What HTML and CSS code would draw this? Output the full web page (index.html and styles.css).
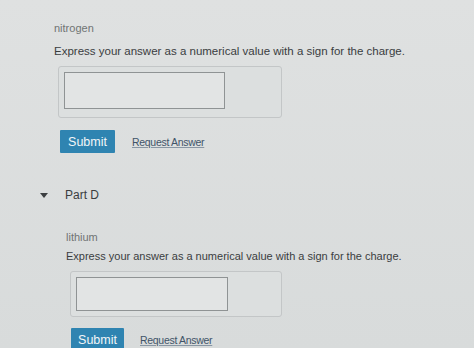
FILE: index.html
```html
<!DOCTYPE html>
<html>
<head>
<meta charset="utf-8">
<link rel="stylesheet" href="styles.css">
</head>
<body>
<div class="page">
  <section class="part part-c">
    <div class="label">nitrogen</div>
    <div class="prompt">Express your answer as a numerical value with a sign for the charge.</div>
    <div class="answer-box"><div class="input"></div></div>
    <div class="actions">
      <button class="submit">Submit</button>
      <a class="request">Request Answer</a>
    </div>
  </section>
  <div class="part-head">
    <span class="caret"></span>
    <span class="part-title">Part D</span>
  </div>
  <section class="part part-d">
    <div class="label">lithium</div>
    <div class="prompt">Express your answer as a numerical value with a sign for the charge.</div>
    <div class="answer-box"><div class="input"></div></div>
    <div class="actions">
      <button class="submit">Submit</button>
      <a class="request">Request Answer</a>
    </div>
  </section>
</div>
</body>
</html>
```
FILE: styles.css
```css
html, body {
  margin: 0;
  padding: 0;
}
body {
  background: linear-gradient(180deg, #dfe1e1 0%, #d8dbdb 100%);
  font-family: "Liberation Sans", Arial, sans-serif;
  width: 474px;
  height: 348px;
  overflow: hidden;
}
.page {
  padding-top: 22px;
}
.part-c {
  padding-left: 54px;
}
.label {
  font-size: 11px;
  color: #707474;
  line-height: 13px;
}
.prompt {
  margin-top: 9px;
  font-size: 11.5px;
  color: #3a3d3f;
  line-height: 14px;
}
.answer-box {
  margin-top: 8px;
  margin-left: 4px;
  width: 224px;
  height: 52px;
  border: 1px solid #c3c6c7;
  border-radius: 3px;
  box-sizing: border-box;
  padding: 5px 0 0 5px;
  background: #dcdfdf;
}
.input {
  width: 161px;
  height: 37px;
  box-sizing: border-box;
  border: 1px solid #8f9394;
  background: #e2e4e4;
}
.actions {
  margin-top: 12px;
  margin-left: 6px;
  display: flex;
  align-items: center;
  gap: 17px;
}
.submit {
  width: 55px;
  height: 23px;
  border: none;
  border-radius: 1px;
  background: #2f84b1;
  color: #f2f6f8;
  font-family: "Liberation Sans", Arial, sans-serif;
  font-size: 12.5px;
  padding: 0;
}
.request {
  font-size: 10.5px;
  letter-spacing: -0.3px;
  color: #3f5468;
  text-decoration: underline;
  text-decoration-color: #8896a3;
}
.part-head {
  margin-top: 35px;
  padding-left: 40px;
  display: flex;
  align-items: center;
  gap: 17px;
}
.caret {
  width: 0;
  height: 0;
  border-left: 4px solid transparent;
  border-right: 4px solid transparent;
  border-top: 5px solid #3c3f41;
}
.part-title {
  font-size: 12px;
  color: #3a3d3f;
}
.part-d {
  padding-left: 66px;
  margin-top: 29px;
}
.part-d .prompt {
  margin-top: 5px;
  font-size: 11px;
}
.part-d .answer-box {
  margin-top: 8px;
  margin-left: 4px;
  width: 212px;
  height: 46px;
  padding: 5px 0 0 5px;
}
.part-d .input {
  width: 152px;
  height: 34px;
}
.part-d .actions {
  margin-top: 11px;
  margin-left: 5px;
}
.part-d .submit {
  width: 53px;
  height: 24px;
}
.part-d .request {
  margin-left: -1px;
}
```
